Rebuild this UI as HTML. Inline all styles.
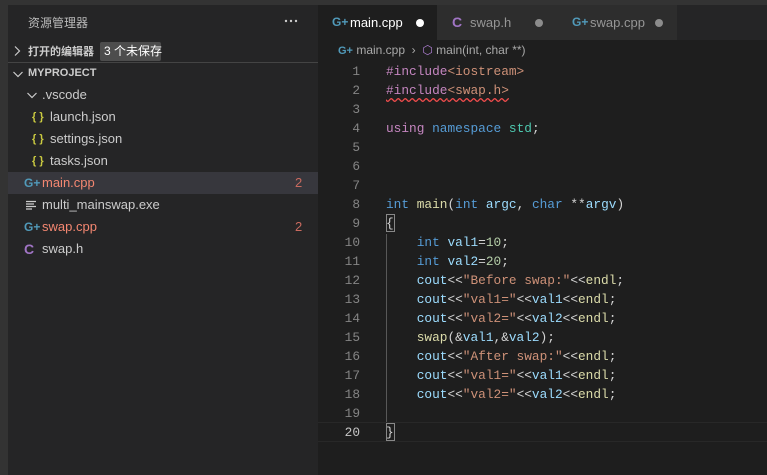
<!DOCTYPE html>
<html><head><meta charset="utf-8"><style>
*{margin:0;padding:0;box-sizing:border-box}
body{width:767px;height:475px;background:#1e1e1e;overflow:hidden;position:relative;font-family:"Liberation Sans","Noto Sans CJK SC",sans-serif;font-size:13px;color:#cccccc}
.a{position:absolute;white-space:pre}
#top{left:0;top:0;width:767px;height:5px;background:#333}
#act{left:0;top:5px;width:8px;height:470px;background:#333}
#side{left:8px;top:5px;width:310px;height:470px;background:#252526}
.row{position:absolute;left:8px;width:310px;height:22px;line-height:22px}
.cpp{color:#519aba;font-weight:bold;font-size:12px}
.ch{color:#a074c4;font-weight:bold;font-size:14px}
.js{color:#cbcb41;font-weight:bold;font-size:11px}
.red{color:#f48771}
#tabs{left:318px;top:5px;width:449px;height:35px;background:#252526}
.tab{position:absolute;top:5px;height:35px;line-height:35px;width:120px;background:#2d2d2d;color:#969696}
.dot{position:absolute;width:8px;height:8px;border-radius:4px;top:14px}
.code{font-family:"Liberation Mono",monospace;font-size:12.8px;line-height:19px}
.ln{position:absolute;left:320px;width:40px;text-align:right;color:#858585}
.cl{position:absolute;left:386px}
.k{color:#569cd6}.p{color:#c586c0}.s{color:#ce9178}.v{color:#9cdcfe}.f{color:#dcdcaa}.n{color:#b5cea8}.t{color:#4ec9b0}.w{color:#d4d4d4}
</style></head><body>
<div class="a" id="top"></div><div class="a" id="act"></div><div class="a" id="side"></div>
<div class="a" style="left:28px;top:14px;font-size:12px;color:#bbb">资源管理器</div>
<svg class="a" style="left:284px;top:19px" width="14" height="4"><circle cx="2" cy="2" r="1.2" fill="#ccc"/><circle cx="7" cy="2" r="1.2" fill="#ccc"/><circle cx="12" cy="2" r="1.2" fill="#ccc"/></svg>
<svg class="a" style="left:13px;top:45px" width="8" height="12"><path d="M2 1.5L6.5 6L2 10.5" stroke="#ccc" stroke-width="1.2" fill="none"/></svg>
<div class="a" style="left:28px;top:43px;font-size:11px;font-weight:bold;color:#ccc">打开的编辑器</div>
<div class="a" style="left:100px;top:42px;width:61px;height:19px;background:#4d4d4d;border-radius:2px;font-size:12px;line-height:19px;padding-left:4px;color:#fff">3 个未保存</div>
<div class="a" style="left:8px;top:62px;width:310px;height:1px;background:#444"></div>
<svg class="a" style="left:12px;top:70px" width="12" height="8"><path d="M1.5 2L6 6.5L10.5 2" stroke="#ccc" stroke-width="1.2" fill="none"/></svg>
<div class="a" style="left:28px;top:67px;font-size:11px;font-weight:bold;color:#ccc">MYPROJECT</div>
<div class="row" style="top:84px"><svg class="a" style="left:18px;top:7px" width="12" height="8"><path d="M1.5 2L6 6.5L10.5 2" stroke="#ccc" stroke-width="1.2" fill="none"/></svg><span class="a" style="left:34px">.vscode</span></div>
<div class="row" style="top:106px"><span class="a js" style="left:24px">{ }</span><span class="a" style="left:42px">launch.json</span></div>
<div class="row" style="top:128px"><span class="a js" style="left:24px">{ }</span><span class="a" style="left:42px">settings.json</span></div>
<div class="row" style="top:150px"><span class="a js" style="left:24px">{ }</span><span class="a" style="left:42px">tasks.json</span></div>
<div class="row" style="top:172px;background:#37373d"><span class="a cpp" style="left:16px">G+</span><span class="a red" style="left:34px">main.cpp</span><span class="a red" style="left:287px;color:#c96a5f">2</span></div>
<div class="row" style="top:194px"><svg class="a" style="left:18px;top:6px" width="11" height="10"><path d="M0 1.5H10M0 4H8M0 6.5H10M0 9H6" stroke="#ccc" stroke-width="1.2"/></svg><span class="a" style="left:34px">multi_mainswap.exe</span></div>
<div class="row" style="top:216px"><span class="a cpp" style="left:16px">G+</span><span class="a red" style="left:34px">swap.cpp</span><span class="a red" style="left:287px;color:#c96a5f">2</span></div>
<div class="row" style="top:238px"><span class="a ch" style="left:16px">C</span><span class="a" style="left:34px">swap.h</span></div>

<div class="a" id="tabs"></div>
<div class="tab" style="left:318px;width:119px;background:#1e1e1e;color:#fff"><span class="a cpp" style="left:14px">G+</span><span class="a" style="left:32px">main.cpp</span><span class="dot" style="left:98px;background:#fff"></span></div>
<div class="tab" style="left:437px"><span class="a ch" style="left:15px">C</span><span class="a" style="left:33px">swap.h</span><span class="dot" style="left:98px;background:#8c8c8c"></span></div>
<div class="tab" style="left:557px"><span class="a cpp" style="left:15px">G+</span><span class="a" style="left:33px">swap.cpp</span><span class="dot" style="left:98px;background:#8c8c8c"></span></div>

<div class="a" style="left:338px;top:43px;font-size:12px;color:#a9a9a9"><span class="cpp" style="font-size:11px">G+</span> main.cpp  ›  <span style="color:#b180d7">⬡</span> main(int, char **)</div>

<div class="a" style="left:386px;top:234px;width:1px;height:190px;background:#585858"></div>
<div class="a" style="left:318px;top:422px;width:449px;height:20px;border-top:1px solid #282828;border-bottom:1px solid #282828"></div>
<div class="a" style="left:386px;top:214px;width:9px;height:18px;border:1px solid #888"></div>
<div class="a" style="left:386px;top:423px;width:9px;height:18px;border:1px solid #888"></div>

<div class="code">
<div class="a ln" style="top:62px">1</div><div class="a cl" style="top:62px"><span class="p">#include</span><span class="s">&lt;iostream&gt;</span></div>
<div class="a ln" style="top:81px">2</div><div class="a cl" style="top:81px;text-decoration:underline wavy #f14c4c;text-underline-offset:3px"><span class="p">#include</span><span class="s">&lt;swap.h&gt;</span></div>
<div class="a ln" style="top:100px">3</div>
<div class="a ln" style="top:119px">4</div><div class="a cl" style="top:119px"><span class="p">using</span> <span class="k">namespace</span> <span class="t">std</span><span class="w">;</span></div>
<div class="a ln" style="top:138px">5</div>
<div class="a ln" style="top:157px">6</div>
<div class="a ln" style="top:176px">7</div>
<div class="a ln" style="top:195px">8</div><div class="a cl" style="top:195px"><span class="k">int</span> <span class="f">main</span><span class="w">(</span><span class="k">int</span> <span class="v">argc</span><span class="w">, </span><span class="k">char</span> <span class="w">**</span><span class="v">argv</span><span class="w">)</span></div>
<div class="a ln" style="top:214px">9</div><div class="a cl w" style="top:214px">{</div>
<div class="a ln" style="top:233px">10</div><div class="a cl" style="top:233px">    <span class="k">int</span> <span class="v">val1</span><span class="w">=</span><span class="n">10</span><span class="w">;</span></div>
<div class="a ln" style="top:252px">11</div><div class="a cl" style="top:252px">    <span class="k">int</span> <span class="v">val2</span><span class="w">=</span><span class="n">20</span><span class="w">;</span></div>
<div class="a ln" style="top:271px">12</div><div class="a cl" style="top:271px">    <span class="v">cout</span><span class="w">&lt;&lt;</span><span class="s">"Before swap:"</span><span class="w">&lt;&lt;</span><span class="f">endl</span><span class="w">;</span></div>
<div class="a ln" style="top:290px">13</div><div class="a cl" style="top:290px">    <span class="v">cout</span><span class="w">&lt;&lt;</span><span class="s">"val1="</span><span class="w">&lt;&lt;</span><span class="v">val1</span><span class="w">&lt;&lt;</span><span class="f">endl</span><span class="w">;</span></div>
<div class="a ln" style="top:309px">14</div><div class="a cl" style="top:309px">    <span class="v">cout</span><span class="w">&lt;&lt;</span><span class="s">"val2="</span><span class="w">&lt;&lt;</span><span class="v">val2</span><span class="w">&lt;&lt;</span><span class="f">endl</span><span class="w">;</span></div>
<div class="a ln" style="top:328px">15</div><div class="a cl" style="top:328px">    <span class="f">swap</span><span class="w">(&amp;</span><span class="v">val1</span><span class="w">,&amp;</span><span class="v">val2</span><span class="w">);</span></div>
<div class="a ln" style="top:347px">16</div><div class="a cl" style="top:347px">    <span class="v">cout</span><span class="w">&lt;&lt;</span><span class="s">"After swap:"</span><span class="w">&lt;&lt;</span><span class="f">endl</span><span class="w">;</span></div>
<div class="a ln" style="top:366px">17</div><div class="a cl" style="top:366px">    <span class="v">cout</span><span class="w">&lt;&lt;</span><span class="s">"val1="</span><span class="w">&lt;&lt;</span><span class="v">val1</span><span class="w">&lt;&lt;</span><span class="f">endl</span><span class="w">;</span></div>
<div class="a ln" style="top:385px">18</div><div class="a cl" style="top:385px">    <span class="v">cout</span><span class="w">&lt;&lt;</span><span class="s">"val2="</span><span class="w">&lt;&lt;</span><span class="v">val2</span><span class="w">&lt;&lt;</span><span class="f">endl</span><span class="w">;</span></div>
<div class="a ln" style="top:404px">19</div>
<div class="a ln" style="top:423px;color:#c6c6c6">20</div><div class="a cl w" style="top:423px">}</div>
</div>
</body></html>
